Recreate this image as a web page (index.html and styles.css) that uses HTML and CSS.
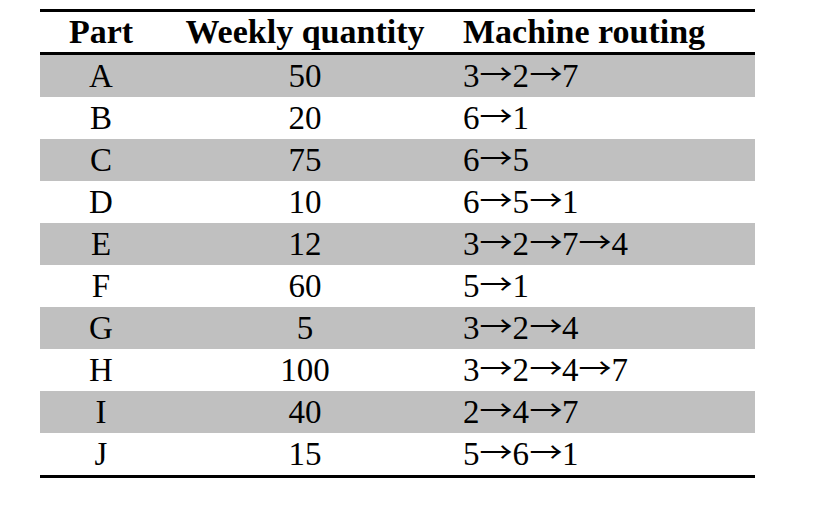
FILE: index.html
```html
<!DOCTYPE html>
<html>
<head>
<meta charset="utf-8">
<link rel="stylesheet" href="styles.css">
</head>
<body>
<table class="parts">
  <thead>
    <tr><th class="c1">Part</th><th class="c2">Weekly quantity</th><th class="c3">Machine routing</th></tr>
  </thead>
  <tbody>
    <tr class="shade"><td class="c1">A</td><td class="c2">50</td><td class="c3">3<span class="arr">→</span>2<span class="arr">→</span>7</td></tr>
    <tr><td class="c1">B</td><td class="c2">20</td><td class="c3">6<span class="arr">→</span>1</td></tr>
    <tr class="shade"><td class="c1">C</td><td class="c2">75</td><td class="c3">6<span class="arr">→</span>5</td></tr>
    <tr><td class="c1">D</td><td class="c2">10</td><td class="c3">6<span class="arr">→</span>5<span class="arr">→</span>1</td></tr>
    <tr class="shade"><td class="c1">E</td><td class="c2">12</td><td class="c3">3<span class="arr">→</span>2<span class="arr">→</span>7<span class="arr">→</span>4</td></tr>
    <tr><td class="c1">F</td><td class="c2">60</td><td class="c3">5<span class="arr">→</span>1</td></tr>
    <tr class="shade"><td class="c1">G</td><td class="c2">5</td><td class="c3">3<span class="arr">→</span>2<span class="arr">→</span>4</td></tr>
    <tr><td class="c1">H</td><td class="c2">100</td><td class="c3">3<span class="arr">→</span>2<span class="arr">→</span>4<span class="arr">→</span>7</td></tr>
    <tr class="shade"><td class="c1">I</td><td class="c2">40</td><td class="c3">2<span class="arr">→</span>4<span class="arr">→</span>7</td></tr>
    <tr class="last"><td class="c1">J</td><td class="c2">15</td><td class="c3">5<span class="arr">→</span>6<span class="arr">→</span>1</td></tr>
  </tbody>
</table>
</body>
</html>
```
FILE: styles.css
```css
html, body {
  margin: 0;
  padding: 0;
  background: #ffffff;
}
body {
  padding: 9px 0 0 40px;
  font-family: "Liberation Serif", "Times New Roman", serif;
  color: #000;
}
.parts {
  border-collapse: separate;
  border-spacing: 0;
  table-layout: fixed;
  width: 715px;
  font-size: 33px;
}
.parts th, .parts td {
  padding: 0;
  white-space: nowrap;
}
.parts th {
  font-weight: bold;
  font-size: 34px;
  line-height: 40px;
  border-top: 3px solid #000;
  border-bottom: 3px solid #000;
}
.parts td {
  line-height: 42px;
  font-weight: normal;
}
.arr {
  display: inline-block;
  font-family: "Noto Sans CJK JP", "DejaVu Sans", sans-serif;
  font-size: 28px;
  line-height: 28px;
  margin: 0 2.5px;
  vertical-align: 2px;
  transform: scaleX(1.18);
}
.c1 { width: 122px; text-align: center; }
.c2 { width: 286px; text-align: center; }
.c3 { text-align: left; padding-left: 15px !important; }
.shade td { background: #c0c0c0; }
.last td { border-bottom: 3px solid #000; }
```
